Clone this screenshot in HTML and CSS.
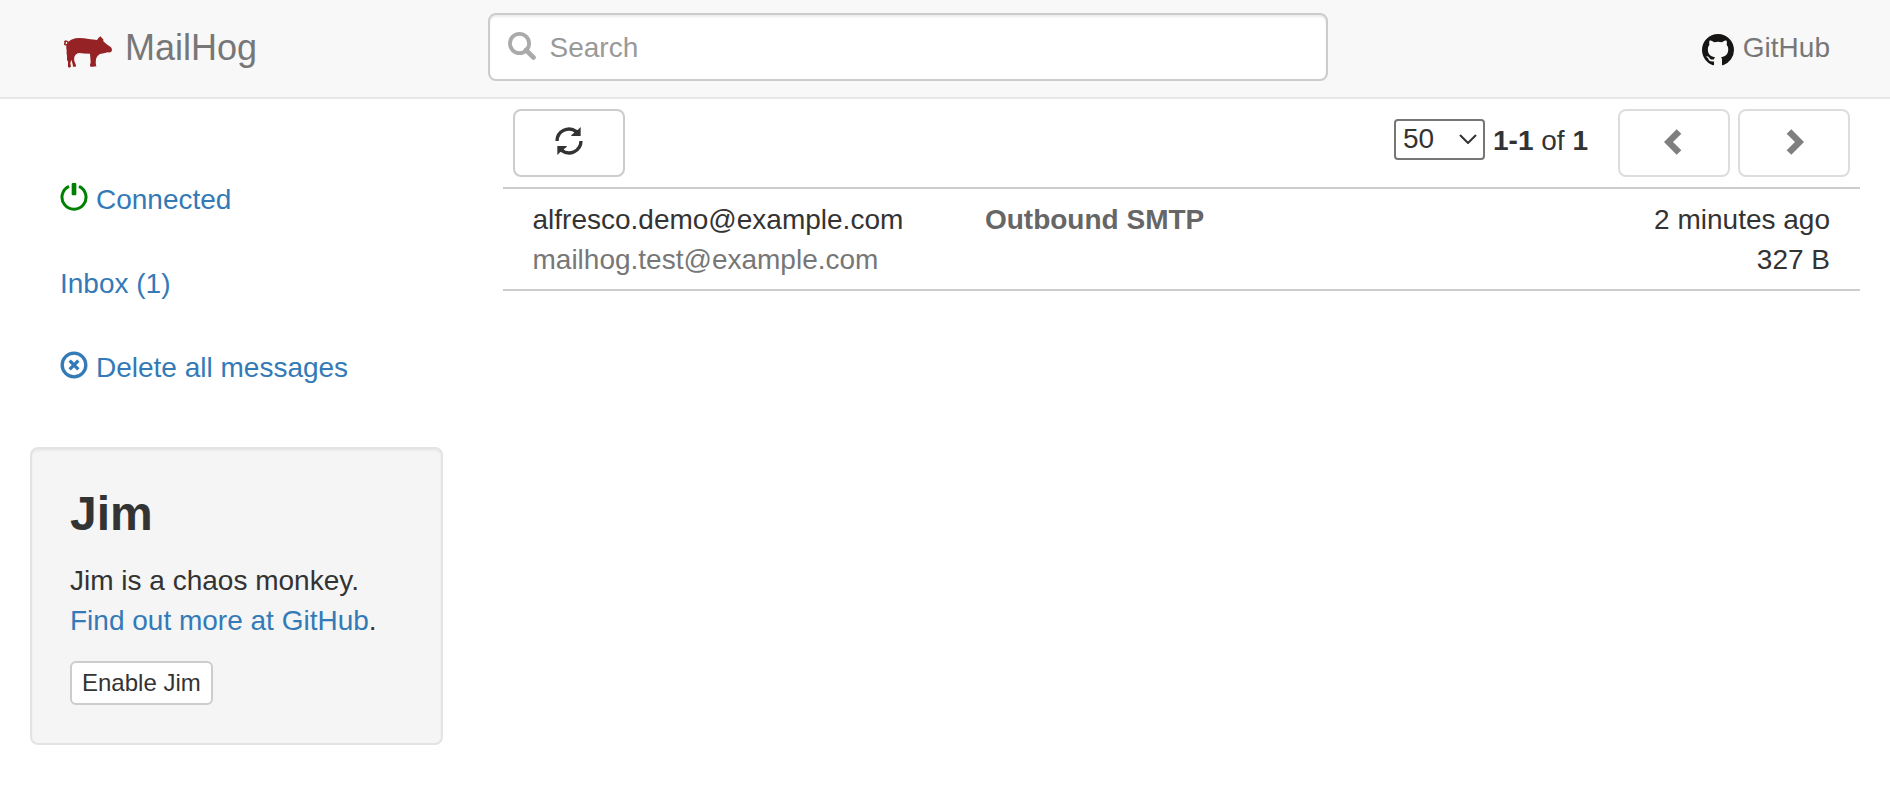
FILE: index.html
```html
<!DOCTYPE html>
<html lang="en">

<head>
    <meta charset="UTF-8">
    <meta name="viewport" content="width=device-width, initial-scale=1">
    <title>MailHog</title>

    <link rel="stylesheet" href="styles.css">
</head>

<body>
    <header class="navbar">
        <a href="#" class="navbar-brand">
            <svg class="pig" viewBox="0 0 144 94" aria-hidden="true">
                <path d="M12 17 Q20 9 34 6 Q52 4 74 8 Q88 10 99 11 Q103 3 110 0 Q113 6 118 9 L118 15 L127 23 L141 33 Q146 39 142 46 Q138 49 131 48 Q120 52 108 53 Q100 57 97 65 Q94 76 96 85 L97 90 L86 91 L79 91 L78 86 L80 78 L78 52 Q58 52 46 50 Q39 50 34 56 Q29 63 31 74 L36 87 L35 91 L27 91 L26 84 L22 70 L19 80 L21 91 L15 94 L12 91 L12 76 L9 70 L9 58 Q7 50 8 42 Q5 30 9 22 Z" />
                <path d="M11 24 Q3 28 1 22 Q7 21 2 16 Q7 11 13 19" fill="none" stroke="#952225" stroke-width="4" />
            </svg>
            MailHog
        </a>
        <form class="navbar-search">
            <svg class="icon" viewBox="0 0 28 28" aria-hidden="true">
                <circle cx="11.5" cy="11.5" r="9.6" fill="none" stroke="currentColor" stroke-width="3.8" />
                <path d="M18 18 L25.5 25.5" stroke="currentColor" stroke-width="4.6" stroke-linecap="round" />
            </svg>
            <input type="text" class="search-input" placeholder="Search" aria-label="Search">
        </form>
        <a href="#" class="navbar-link">
            <svg class="octocat" viewBox="0 0 16 16" aria-hidden="true">
                <path d="M8 0C3.58 0 0 3.58 0 8c0 3.54 2.29 6.53 5.47 7.59.4.07.55-.17.55-.38 0-.19-.01-.82-.01-1.49-2.01.37-2.53-.49-2.69-.94-.09-.23-.48-.94-.82-1.13-.28-.15-.68-.52-.01-.53.63-.01 1.08.58 1.23.82.72 1.21 1.87.87 2.33.66.07-.52.28-.87.51-1.07-1.78-.2-3.64-.89-3.64-3.95 0-.87.31-1.59.82-2.15-.08-.2-.36-1.02.08-2.12 0 0 .67-.21 2.2.82.64-.18 1.32-.27 2-.27s1.36.09 2 .27c1.53-1.04 2.2-.82 2.2-.82.44 1.1.16 1.92.08 2.12.51.56.82 1.27.82 2.15 0 3.07-1.87 3.75-3.65 3.95.29.25.54.73.54 1.48 0 1.07-.01 1.93-.01 2.2 0 .21.15.46.55.38A8.01 8.01 0 0 0 16 8c0-4.42-3.58-8-8-8z" />
            </svg>
            GitHub
        </a>
    </header>

    <div class="container">
        <aside class="sidebar">
            <ul class="nav">
                <li>
                    <a href="#">
                        <svg class="icon connected" viewBox="0 0 84 84" aria-hidden="true">
                            <path d="M27 10 A36 36 0 1 0 57 10" fill="none" stroke="currentColor" stroke-width="9" />
                            <rect x="35" y="0" width="14" height="37" rx="3" fill="currentColor" />
                        </svg>
                        Connected
                    </a>
                </li>
                <li><a href="#">Inbox (1)</a></li>
                <li>
                    <a href="#">
                        <svg class="icon" viewBox="0 0 84 84" aria-hidden="true">
                            <circle cx="42" cy="42" r="35.5" fill="none" stroke="currentColor" stroke-width="10" />
                            <path d="M29 29 L55 55 M55 29 L29 55" stroke="currentColor" stroke-width="10" />
                        </svg>
                        Delete all messages
                    </a>
                </li>
            </ul>
            <div class="well">
                <h3>Jim</h3>
                <p>Jim is a chaos monkey.<br><a href="#">Find out more at GitHub</a>.</p>
                <button type="button" class="btn btn-small">Enable Jim</button>
            </div>
        </aside>

        <main class="main">
            <div class="toolbar">
                <button type="button" class="btn" aria-label="Refresh">
                    <svg class="icon" viewBox="0 0 84 84" aria-hidden="true">
                        <path d="M6 42 A36 36 0 0 1 64 14" fill="none" stroke="currentColor" stroke-width="10" />
                        <path d="M77 0 V27 H49 V24 L57 18 L60 8 L68 9 Z" fill="currentColor" />
                        <path d="M78 42 A36 36 0 0 1 20 70" fill="none" stroke="currentColor" stroke-width="10" />
                        <path d="M7 84 V57 H35 V60 L27 66 L24 76 L16 75 Z" fill="currentColor" />
                    </svg>
                </button>
                <div class="paging">
                    <div class="page-size">
                        <select aria-label="Messages per page">
                            <option>25</option>
                            <option selected>50</option>
                            <option>100</option>
                        </select>
                        <svg class="caret" viewBox="0 0 18 10" aria-hidden="true">
                            <path d="M1 1 L9 9 L17 1" fill="none" stroke="currentColor" stroke-width="2" />
                        </svg>
                    </div>
                    <span class="range"><b>1-1</b> of <b>1</b></span>
                    <button type="button" class="btn" disabled aria-label="Previous page">
                        <svg class="chevron" viewBox="0 0 60 78" aria-hidden="true">
                            <path d="M0 39 L38 1 L52 14 L27 39 L52 64 L38 77 Z" />
                        </svg>
                    </button>
                    <button type="button" class="btn" disabled aria-label="Next page">
                        <svg class="chevron" viewBox="0 0 60 78" aria-hidden="true">
                            <path d="M60 39 L22 1 L8 14 L33 39 L8 64 L22 77 Z" />
                        </svg>
                    </button>
                </div>
            </div>

            <div class="message">
                <div class="addresses">
                    alfresco.demo@example.com
                    <div class="to">mailhog.test@example.com</div>
                </div>
                <div class="subject">Outbound SMTP</div>
                <div class="details">
                    2 minutes ago
                    <div>327 B</div>
                </div>
            </div>
        </main>
    </div>
</body>

</html>
```
FILE: styles.css
```css
* {
    box-sizing: border-box;
}

body {
    margin: 0;
    font-family: "Helvetica Neue", Helvetica, "Liberation Sans", Arial, sans-serif;
    font-size: 28px;
    line-height: 40px;
    color: #333;
    background-color: #fff;
}

a {
    color: #337ab7;
    text-decoration: none;
}

svg {
    display: block;
    flex-shrink: 0;
}

.icon {
    width: 28px;
    height: 28px;
}

/* top bar */
.navbar {
    display: flex;
    align-items: center;
    height: 99px;
    padding-bottom: 3px;
    background-color: #f8f8f8;
    border-bottom: 2px solid #e7e7e7;
}

.navbar-brand {
    display: flex;
    align-items: center;
    gap: 13px;
    width: 25%;
    padding: 2px 0 0 64px;
    font-size: 36px;
    color: #777;
}

.pig {
    width: 48px;
    height: 32px;
    margin-top: 8px;
    fill: #952225;
}

.navbar-search {
    position: relative;
    flex: 0 1 840px;
    margin-left: 15px;
}

.navbar-search .icon {
    position: absolute;
    top: 19px;
    left: 20px;
    color: #aaa;
}

.search-input {
    display: block;
    width: 100%;
    height: 68px;
    padding: 13px 24px 11px 60px;
    font: inherit;
    color: #555;
    background-color: #fff;
    border: 2px solid #ccc;
    border-radius: 8px;
    box-shadow: inset 0 2px 2px rgba(0, 0, 0, 0.075);
}

.search-input::placeholder {
    color: #999;
    opacity: 1;
}

.navbar-link {
    display: flex;
    align-items: center;
    gap: 9px;
    margin-left: auto;
    padding: 2px 60px 0 0;
    color: #777;
}

.octocat {
    width: 32px;
    height: 32px;
    margin-top: 4px;
    fill: #161514;
}

/* page */
.container {
    display: flex;
}

.sidebar {
    width: 25%;
    padding: 60px 30px 0;
}

.nav {
    margin: 0 0 40px;
    padding: 0;
    list-style: none;
}

.nav li + li {
    margin-top: 4px;
}

.nav a {
    display: flex;
    gap: 8px;
    padding: 21px 30px 19px;
}

.nav .icon {
    margin-top: 3px;
}

.nav .connected {
    color: #008000;
}

.well {
    padding: 38px;
    background-color: #f5f5f5;
    border: 2px solid #e3e3e3;
    border-radius: 8px;
    box-shadow: inset 0 2px 2px rgba(0, 0, 0, 0.05);
}

.well h3 {
    margin: 0 0 20px;
    font-size: 48px;
    line-height: 54px;
}

.well p {
    margin: 0 0 20px;
}

.btn {
    display: flex;
    align-items: center;
    justify-content: center;
    width: 112px;
    height: 68px;
    padding: 0 0 4px;
    font: inherit;
    color: #333;
    background-color: #fff;
    border: 2px solid #ccc;
    border-radius: 8px;
}

.btn:disabled {
    color: #7f7f7f;
    border-color: #ddd;
}

.btn-small {
    width: auto;
    height: 44px;
    padding: 0 10px;
    font-size: 24px;
    border-radius: 6px;
}

.chevron {
    width: 20px;
    height: 26px;
    margin-top: 2px;
    fill: currentColor;
}

/* message list */
.main {
    width: 75%;
    padding: 0 30px;
}

.toolbar {
    display: flex;
    justify-content: space-between;
    padding: 10px;
    border-bottom: 2px solid #ccc;
}

.paging {
    display: flex;
    align-items: center;
    gap: 8px;
}

.page-size {
    position: relative;
    margin-bottom: 8px;
}

.page-size select {
    display: block;
    width: 91px;
    height: 41px;
    padding: 0 7px;
    font: inherit;
    line-height: 36px;
    color: #333;
    background-color: #fff;
    border: 2px solid #767676;
    border-radius: 4px;
    appearance: none;
}

.caret {
    position: absolute;
    top: 15px;
    right: 8px;
    width: 18px;
    height: 10px;
    pointer-events: none;
}

.range {
    margin: 0 22px 4px 0;
}

.message {
    display: flex;
    padding: 11px 0 9px;
    border-bottom: 2px solid #ccc;
}

.addresses,
.subject,
.details {
    width: 33.33%;
    padding: 0 30px;
}

.to {
    color: #777;
}

.subject {
    font-weight: bold;
    color: #666;
}

.details {
    margin-left: auto;
    text-align: right;
}
```
